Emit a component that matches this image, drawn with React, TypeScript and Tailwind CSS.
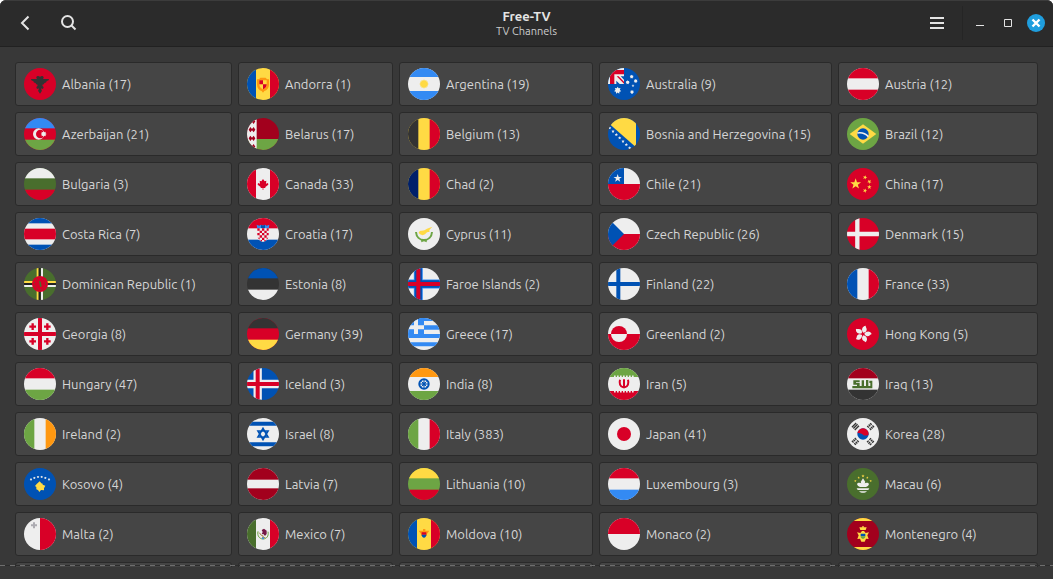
import React from 'react';

const WHITE = '#eeeeee';
const RED = '#d80027';
const DARK_RED = '#a2001d';
const BLUE = '#0052b4';
const SKY = '#338af3';
const NAVY = '#00206a';
const YELLOW = '#ffda44';
const ORANGE = '#ff9811';
const GREEN = '#6da544';
const FOREST = '#496e2d';
const BLACK = '#333333';

// All flags are drawn on a 96 x 96 grid and clipped to a circle.
const Rows = ({ c, a = 31, b = 65 }: { c: string[]; a?: number; b?: number }) => (
  <>
    <rect width="96" height="96" fill={c[1]} />
    <rect width="96" height={a} fill={c[0]} />
    <rect y={b} width="96" height={96 - b} fill={c[2]} />
  </>
);

const Cols = ({ c, a = 31, b = 65 }: { c: string[]; a?: number; b?: number }) => (
  <>
    <rect width="96" height="96" fill={c[1]} />
    <rect width={a} height="96" fill={c[0]} />
    <rect x={b} width={96 - b} height="96" fill={c[2]} />
  </>
);

const Bg = ({ c }: { c: string }) => <rect width="96" height="96" fill={c} />;

interface StarProps {
  x: number;
  y: number;
  r: number;
  c: string;
  n?: number;
  inner?: number;
  turn?: number;
}

const Star = ({ x, y, r, c, n = 5, inner = 0.4, turn = 0 }: StarProps) => {
  const points = Array.from({ length: n * 2 }, (_, i) => {
    const radius = i % 2 ? r * inner : r;
    const angle = (Math.PI * i) / n - Math.PI / 2 + (turn * Math.PI) / 180;
    return `${(x + radius * Math.cos(angle)).toFixed(1)},${(y + radius * Math.sin(angle)).toFixed(1)}`;
  }).join(' ');
  return <polygon points={points} fill={c} />;
};

const Plus = ({ x, y, s, t, c }: { x: number; y: number; s: number; t: number; c: string }) => (
  <path d={`M${x - s} ${y}h${s * 2}M${x} ${y - s}v${s * 2}`} stroke={c} strokeWidth={t} />
);

const Cross = ({ x, t, c }: { x: number; t: number; c: string }) => (
  <path d={`M${x} 0V96M0 48H96`} stroke={c} strokeWidth={t} />
);

const flags: Record<string, React.ReactNode> = {
  Albania: (
    <>
      <Bg c={RED} />
      <path
        d="M75 33H57c4-3 2-9-3-9-3 0-5 1-6 3-1-2-3-3-6-3-5 0-7 6-3 9H21c0 4 3 6 7 6 0 4 3 6 7 6 0 4 3 5 6 5l-1 5-3 2 2 6 5-2v4l-2 3 6 9 6-9-2-3v-4l5 2 2-6-3-2-1-5c3 0 6-1 6-5 4 0 7-2 7-6 4 0 7-2 7-6z"
        fill={BLACK}
      />
    </>
  ),
  Andorra: (
    <>
      <Cols c={[BLUE, YELLOW, RED]} a={27} b={69} />
      <path d="M30 34c5 0 8-2 10-5h16c2 3 5 5 10 5v16c0 10-6 16-14 19l-4 5-4-5c-8-3-14-9-14-19z" fill={ORANGE} />
      <path d="M37 37h22v13c0 7-5 11-11 14-6-3-11-7-11-14z" fill={YELLOW} />
      <path d="M37 37h11v12H37zM48 49h11c0 8-5 12-11 15z" fill={RED} />
    </>
  ),
  Argentina: (
    <>
      <Rows c={[SKY, WHITE, SKY]} a={27} b={69} />
      <Star x={48} y={48} r={14} c={YELLOW} n={12} inner={0.75} />
    </>
  ),
  Australia: (
    <>
      <Bg c={BLUE} />
      <rect width="48" height="48" fill={WHITE} />
      <path d="M6 6h42v13H19v29H6z" fill={RED} />
      <path d="M38 25h10v10zM25 38v10h10z" fill={BLUE} />
      <path d="M26 25h6l16 16v6z" fill={RED} />
      <Star x={29} y={67} r={11} c={WHITE} n={7} inner={0.6} />
      <Star x={71} y={26} r={6} c={WHITE} n={7} inner={0.7} />
      <Star x={59} y={43} r={6} c={WHITE} n={7} inner={0.7} />
      <Star x={83} y={39} r={6} c={WHITE} n={7} inner={0.7} />
      <Star x={75} y={53} r={5} c={WHITE} />
      <Star x={72} y={72} r={6} c={WHITE} n={7} inner={0.7} />
    </>
  ),
  Austria: <Rows c={[RED, WHITE, RED]} />,
  Azerbaijan: (
    <>
      <Rows c={[SKY, RED, GREEN]} />
      <circle cx="44" cy="48" r="17" fill={WHITE} />
      <circle cx="49" cy="48" r="13" fill={RED} />
      <Star x={59} y={48} r={9} c={WHITE} n={8} inner={0.65} />
    </>
  ),
  Belarus: (
    <>
      <Bg c={DARK_RED} />
      <rect y="63" width="96" height="33" fill={GREEN} />
      <rect width="29" height="96" fill={WHITE} />
      {[10, 35, 61, 86].map((y) => (
        <path key={y} d={`M5 ${y}l5-8 5 6 5-6 5 8-5 8-5-6-5 6z`} fill={DARK_RED} />
      ))}
    </>
  ),
  Belgium: <Cols c={[BLACK, YELLOW, RED]} />,
  'Bosnia and Herzegovina': (
    <>
      <Bg c={BLUE} />
      <path d="M2 16L84 88V0H2z" fill={YELLOW} />
      {[0, 1, 2, 3, 4, 5, 6].map((i) => (
        <Star key={i} x={5 + i * 10} y={30 + i * 10} r={5} c={WHITE} inner={0.5} />
      ))}
    </>
  ),
  Brazil: (
    <>
      <Bg c={GREEN} />
      <path d="M48 19l40 29-40 29L8 48z" fill={YELLOW} />
      <circle cx="48" cy="48" r="17" fill={BLUE} />
      <path d="M31 45c12-2 25 2 33 11" fill="none" stroke={WHITE} strokeWidth="5" />
    </>
  ),
  Bulgaria: <Rows c={[WHITE, FOREST, RED]} />,
  Canada: (
    <>
      <Cols c={[RED, WHITE, RED]} a={27} b={69} />
      <path d="M48 33l5 7 5-2-1 9 6-2 1 5-9 7v3h-6v6h-2v-6h-6v-3l-9-7 1-5 6 2-1-9 5 2z" fill={RED} />
    </>
  ),
  Chad: <Cols c={[NAVY, YELLOW, RED]} />,
  Chile: (
    <>
      <Bg c={WHITE} />
      <rect y="48" width="96" height="48" fill={RED} />
      <rect width="48" height="48" fill={BLUE} />
      <Star x={29} y={31} r={13} c={WHITE} />
    </>
  ),
  China: (
    <>
      <Bg c={RED} />
      <Star x={26} y={48} r={17} c={YELLOW} />
      <Star x={54} y={28} r={7} c={YELLOW} turn={20} />
      <Star x={67} y={41} r={7} c={YELLOW} turn={40} />
      <Star x={67} y={57} r={7} c={YELLOW} />
      <Star x={54} y={68} r={7} c={YELLOW} turn={20} />
    </>
  ),
  'Costa Rica': (
    <>
      <Rows c={[BLUE, WHITE, BLUE]} a={16} b={80} />
      <rect y="32" width="96" height="32" fill={RED} />
    </>
  ),
  Croatia: (
    <>
      <Rows c={[RED, WHITE, BLUE]} />
      <path d="M29 20l8 3 5-3 6 3 6-3 5 3 8-3-2 13H31z" fill={SKY} />
      <path d="M42 20l6 3 6-3v12H42z" fill={BLUE} />
      <path d="M31 31h34v24c0 9-8 15-17 17-9-2-17-8-17-17z" fill={WHITE} />
      <path
        d="M31 31h7v7h-7zM45 31h7v7h-7zM59 31h6v7h-6zM38 38h7v7h-7zM52 38h7v7h-7zM31 45h7v7h-7zM45 45h7v7h-7zM59 45h6v7h-6zM38 52h7v7h-7zM52 52h7v7h-7zM32 59h6v6zM45 59h7v7h-7zM59 59h5l-5 6zM39 66h6v5zM52 66h6l-6 5z"
        fill={RED}
      />
    </>
  ),
  Cyprus: (
    <>
      <Bg c={WHITE} />
      <path d="M32 45c0-6 5-7 9-7 6 0 11-3 16-6l16-6-9 10 1 5-8 2-6 6-7 3-8-3z" fill={YELLOW} />
      <path d="M24 42c1 15 11 24 24 24s23-9 24-24" fill="none" stroke={GREEN} strokeWidth="6" />
      <path d="M39 63h18l-1 10-8-3-8 3z" fill={GREEN} />
    </>
  ),
  'Czech Republic': (
    <>
      <Bg c={WHITE} />
      <rect y="48" width="96" height="48" fill={RED} />
      <path d="M0 0l48 48L0 96z" fill={BLUE} />
    </>
  ),
  Denmark: (
    <>
      <Bg c={RED} />
      <Cross x={31} t={13} c={WHITE} />
    </>
  ),
  'Dominican Republic': (
    <>
      <Bg c={FOREST} />
      <path d="M41 0v96M0 42h96" stroke={YELLOW} strokeWidth="6" />
      <path d="M54 0v96M0 54h96" stroke={WHITE} strokeWidth="6" />
      <path d="M47 0v96M0 48h96" stroke="#222222" strokeWidth="6" />
      <circle cx="48" cy="48" r="24" fill={RED} />
      <circle cx="48" cy="48" r="17" fill="none" stroke={FOREST} strokeWidth="3" strokeDasharray="3 8" />
      <path d="M45 38l5 3 3 14-4 3-2-8z" fill={FOREST} />
    </>
  ),
  Estonia: <Rows c={[BLUE, BLACK, WHITE]} />,
  'Faroe Islands': (
    <>
      <Bg c={WHITE} />
      <Cross x={31} t={27} c={SKY} />
      <Cross x={31} t={22} c={BLUE} />
      <Cross x={31} t={12} c={RED} />
    </>
  ),
  Finland: (
    <>
      <Bg c={WHITE} />
      <Cross x={31} t={12} c={BLUE} />
    </>
  ),
  France: <Cols c={[BLUE, WHITE, RED]} />,
  Georgia: (
    <>
      <Bg c={WHITE} />
      <Cross x={48} t={12} c={RED} />
      {[26, 70].map((x) => (
        <React.Fragment key={x}>
          <Plus x={x} y={26} s={10} t={7} c={RED} />
          <Plus x={x} y={70} s={10} t={7} c={RED} />
        </React.Fragment>
      ))}
    </>
  ),
  Germany: <Rows c={[BLACK, RED, YELLOW]} />,
  Greece: (
    <>
      <Bg c={WHITE} />
      <path d="M0 0h96v9H0zM0 22h96v13H0zM0 48h96v12H0zM0 73h96v12H0z" fill={SKY} />
      <rect width="48" height="48" fill={SKY} />
      <path d="M24 0v48M0 28h48" stroke={WHITE} strokeWidth="12" />
    </>
  ),
  Greenland: (
    <>
      <Bg c={WHITE} />
      <rect y="48" width="96" height="48" fill={RED} />
      <path d="M9 48a24 24 0 0 1 48 0z" fill={RED} />
      <path d="M9 48a24 24 0 0 0 48 0z" fill={WHITE} />
    </>
  ),
  'Hong Kong': (
    <>
      <Bg c={RED} />
      {[12, 84, 156, 228, 300].map((a) => (
        <path key={a} d="M48 44c-8-6-8-18 3-22 0 5 7 7 5 15-1 4-5 6-8 7z" fill={WHITE} transform={`rotate(${a} 48 48)`} />
      ))}
    </>
  ),
  Hungary: <Rows c={[RED, WHITE, GREEN]} />,
  Iceland: (
    <>
      <Bg c={BLUE} />
      <Cross x={32} t={25} c={WHITE} />
      <Cross x={32} t={12} c={RED} />
    </>
  ),
  India: (
    <>
      <Rows c={[ORANGE, WHITE, GREEN]} a={27} b={69} />
      <circle cx="48" cy="48" r="17" fill={BLUE} />
      <circle cx="48" cy="48" r="11" fill={WHITE} />
      <path d="M48 36v24M36 48h24M40 40l16 16M56 40L40 56" stroke={BLUE} strokeWidth="3" />
      <circle cx="48" cy="48" r="5" fill={BLUE} />
    </>
  ),
  Iran: (
    <>
      <Rows c={[GREEN, WHITE, RED]} a={27} b={69} />
      <path d="M18 25h62" stroke={WHITE} strokeWidth="5" strokeDasharray="5 4" />
      <path d="M18 71h62" stroke={WHITE} strokeWidth="5" strokeDasharray="5 4" />
      <path d="M36 35c-3 11 0 21 10 23M60 35c3 11 0 21-10 23" fill="none" stroke={RED} strokeWidth="6" />
      <path d="M48 34v27" stroke={RED} strokeWidth="6" />
    </>
  ),
  Iraq: (
    <>
      <Rows c={[DARK_RED, WHITE, BLACK]} />
      <path
        d="M16 61v-7h14v-4H19V37h19v6H27v2h11v9h6V37h7v17h6V36h7v18h6V45h-3v-7h9v23H16z"
        fill={FOREST}
      />
    </>
  ),
  Ireland: <Cols c={[GREEN, WHITE, ORANGE]} />,
  Israel: (
    <>
      <Bg c={WHITE} />
      <path d="M0 17h96M0 79h96" stroke={BLUE} strokeWidth="12" />
      <path d="M48 31l15 26H33zM48 65L33 39h30z" fill="none" stroke={BLUE} strokeWidth="5" />
    </>
  ),
  Italy: <Cols c={[GREEN, WHITE, RED]} />,
  Japan: (
    <>
      <Bg c={WHITE} />
      <circle cx="48" cy="48" r="21" fill={RED} />
    </>
  ),
  Korea: (
    <>
      <Bg c={WHITE} />
      <circle cx="48" cy="48" r="17" fill={BLUE} />
      <path d="M31 48a17 17 0 0 1 34 0c0 6-12 6-17 2s-17-8-17-2z" fill={RED} />
      {[45, 135, 225, 315].map((a, i) => (
        <path
          key={a}
          d="M16 39v18M22 39v18M10 39v18"
          stroke={BLACK}
          strokeWidth="4"
          strokeDasharray={i === 0 ? undefined : '7 3'}
          transform={`rotate(${a} 48 48)`}
        />
      ))}
    </>
  ),
  Kosovo: (
    <>
      <Bg c={BLUE} />
      {[[21, 34], [31, 30], [42, 27], [53, 27], [64, 30], [75, 34]].map(([x, y]) => (
        <Star key={x} x={x} y={y} r={4} c={WHITE} inner={0.6} />
      ))}
      <path d="M47 40l5 6 4 1v3l8 3-4 8v6l-9-1-5 6-4-6-5-2v-7l-4-3 5-6z" fill={YELLOW} />
    </>
  ),
  Latvia: <Rows c={[DARK_RED, WHITE, DARK_RED]} a={35} b={61} />,
  Lithuania: <Rows c={[YELLOW, GREEN, RED]} />,
  Luxembourg: <Rows c={[RED, WHITE, SKY]} />,
  Macau: (
    <>
      <Bg c={FOREST} />
      <Star x={48} y={24} r={5} c={YELLOW} />
      <Star x={35} y={29} r={4} c={YELLOW} />
      <Star x={61} y={29} r={4} c={YELLOW} />
      <Star x={25} y={39} r={4} c={YELLOW} />
      <Star x={71} y={39} r={4} c={YELLOW} />
      <path d="M48 31l7 11-2 4c5-3 11-2 13 2-1 5-5 8-9 9H39c-4-1-8-4-9-9 2-4 8-5 13-2l-2-4z" fill={WHITE} />
      <path d="M29 61h38l-3 5H32zM36 70h24c-7 6-17 6-24 0z" fill={WHITE} />
    </>
  ),
  Malta: (
    <>
      <Bg c={WHITE} />
      <rect x="48" width="48" height="96" fill={RED} />
      <Plus x={30} y={22} s={9} t={6} c="#acabb1" />
    </>
  ),
  Mexico: (
    <>
      <Cols c={[FOREST, WHITE, RED]} a={27} b={69} />
      <path d="M33 40c-3 14 5 23 15 23s18-8 15-22" fill="none" stroke={GREEN} strokeWidth="3" />
      <path d="M44 36l7-4 8 6v10l-5 6-5-6-5 1 3-7z" fill="#751a46" />
      <path d="M37 44l6 8 6 2-3 5h9" fill="none" stroke="#a5813f" strokeWidth="3" />
      <circle cx="48" cy="61" r="3" fill={SKY} />
    </>
  ),
  Moldova: (
    <>
      <Cols c={[BLUE, YELLOW, RED]} a={27} b={69} />
      <path d="M45 33h7v5h12l-7 10v5H39v-5l-7-10h13z" fill={ORANGE} />
      <path d="M41 43h14v7H41z" fill={RED} />
      <path d="M41 50h14c0 5-3 8-7 9-4-1-7-4-7-9z" fill={BLUE} />
    </>
  ),
  Monaco: (
    <>
      <Bg c={WHITE} />
      <rect width="96" height="48" fill={RED} />
    </>
  ),
  Montenegro: (
    <>
      <Rows c={[YELLOW, DARK_RED, YELLOW]} a={9} b={87} />
      <path d="M46 24h4v4h9l-3 8H40l-3-8h9z" fill={YELLOW} />
      <path d="M30 43l10 2 5-6h6l5 6 10-2-5 9 4 11-8-1-4 9H43l-4-9-8 1 4-11z" fill={YELLOW} />
      <path d="M41 47h14v8H41z" fill={BLUE} />
      <path d="M41 55h14c0 5-3 7-7 8-4-1-7-3-7-8z" fill={GREEN} />
    </>
  ),
};

const countries: { name: string; count: number }[] = [
  { name: 'Albania', count: 17 },
  { name: 'Andorra', count: 1 },
  { name: 'Argentina', count: 19 },
  { name: 'Australia', count: 9 },
  { name: 'Austria', count: 12 },
  { name: 'Azerbaijan', count: 21 },
  { name: 'Belarus', count: 17 },
  { name: 'Belgium', count: 13 },
  { name: 'Bosnia and Herzegovina', count: 15 },
  { name: 'Brazil', count: 12 },
  { name: 'Bulgaria', count: 3 },
  { name: 'Canada', count: 33 },
  { name: 'Chad', count: 2 },
  { name: 'Chile', count: 21 },
  { name: 'China', count: 17 },
  { name: 'Costa Rica', count: 7 },
  { name: 'Croatia', count: 17 },
  { name: 'Cyprus', count: 11 },
  { name: 'Czech Republic', count: 26 },
  { name: 'Denmark', count: 15 },
  { name: 'Dominican Republic', count: 1 },
  { name: 'Estonia', count: 8 },
  { name: 'Faroe Islands', count: 2 },
  { name: 'Finland', count: 22 },
  { name: 'France', count: 33 },
  { name: 'Georgia', count: 8 },
  { name: 'Germany', count: 39 },
  { name: 'Greece', count: 17 },
  { name: 'Greenland', count: 2 },
  { name: 'Hong Kong', count: 5 },
  { name: 'Hungary', count: 47 },
  { name: 'Iceland', count: 3 },
  { name: 'India', count: 8 },
  { name: 'Iran', count: 5 },
  { name: 'Iraq', count: 13 },
  { name: 'Ireland', count: 2 },
  { name: 'Israel', count: 8 },
  { name: 'Italy', count: 383 },
  { name: 'Japan', count: 41 },
  { name: 'Korea', count: 28 },
  { name: 'Kosovo', count: 4 },
  { name: 'Latvia', count: 7 },
  { name: 'Lithuania', count: 10 },
  { name: 'Luxembourg', count: 3 },
  { name: 'Macau', count: 6 },
  { name: 'Malta', count: 2 },
  { name: 'Mexico', count: 7 },
  { name: 'Moldova', count: 10 },
  { name: 'Monaco', count: 2 },
  { name: 'Montenegro', count: 4 },
];

const cardClass = 'h-11 rounded-[3px] border border-[#2a2a2a] bg-[#454545]';

const CountryButton: React.FC<{ name: string; count: number }> = ({ name, count }) => (
  <button className={`${cardClass} flex items-center gap-1.5 px-2 text-left hover:bg-[#4d4d4d]`}>
    <svg viewBox="0 0 96 96" className="size-8 shrink-0 overflow-hidden rounded-full" aria-hidden="true">
      {flags[name]}
    </svg>
    <span className="leading-5 whitespace-nowrap">{name} ({count})</span>
  </button>
);

const HeaderBar = () => (
  <header className="grid h-[47px] shrink-0 grid-cols-[1fr_auto_1fr] items-center rounded-t-[6px] border-t border-b border-t-[#3c3c3c] border-b-[#212121] bg-[#2b2b2b] pb-px text-[#e4e4e4]">
    <div className="flex items-center gap-2 pl-[7px]">
      <button aria-label="Back" className="flex size-9 items-center justify-center">
        <svg width="16" height="16" viewBox="0 0 16 16" fill="none" stroke="currentColor" strokeWidth="2">
          <path d="M11.5 1.5L5 8l6.5 6.5" />
        </svg>
      </button>
      <button aria-label="Search" className="flex size-9 items-center justify-center">
        <svg width="16" height="16" viewBox="0 0 16 16" fill="none" stroke="currentColor" strokeWidth="2">
          <circle cx="6.5" cy="6.5" r="5.5" />
          <path d="M10.5 10.5l4 4" />
        </svg>
      </button>
    </div>
    <div className="text-center">
      <h1 className="text-[13px] leading-4 font-bold">Free-TV</h1>
      <p className="text-[11px] leading-[14px] text-[#cccccc]">TV Channels</p>
    </div>
    <div className="flex items-center justify-end pr-[3px]">
      <button aria-label="Menu" className="flex size-9 items-center justify-center">
        <svg width="16" height="16" viewBox="0 0 16 16" fill="currentColor">
          <path d="M1 2h14v2H1zM1 7h14v2H1zM1 12h14v2H1z" />
        </svg>
      </button>
      <div className="mr-[3px] ml-[7px] h-[34px] w-px bg-[#252525]" />
      <button aria-label="Minimize" className="flex h-9 w-7 items-center justify-center">
        <svg width="16" height="16" viewBox="0 0 16 16" fill="currentColor">
          <path d="M4 10h8v1H4z" />
        </svg>
      </button>
      <button aria-label="Maximize" className="flex h-9 w-7 items-center justify-center">
        <svg width="16" height="16" viewBox="0 0 16 16" fill="none" stroke="currentColor">
          <path d="M4.5 4.5h7v7h-7z" />
        </svg>
      </button>
      <button aria-label="Close" className="flex h-9 w-7 items-center justify-center">
        <svg width="18" height="18" viewBox="0 0 18 18">
          <circle cx="9" cy="9" r="9" fill="#1f9ede" />
          <path d="M5.5 5.5l7 7M12.5 5.5l-7 7" stroke="#ffffff" strokeWidth="2.4" />
        </svg>
      </button>
    </div>
  </header>
);

export default function App() {
  return (
    <div className="h-screen bg-white font-['Ubuntu','Noto_Sans',sans-serif]">
      <div className="flex h-full flex-col rounded-t-[6px] bg-[#383838] text-[13px] text-[#d6d6d6]">
        <HeaderBar />
        <main className="relative min-h-0 flex-1 overflow-hidden">
          <div className="grid grid-cols-[217fr_155fr_194fr_233fr_200fr] gap-1.5 p-[15px]">
            {countries.map((c) => (
              <CountryButton key={c.name} name={c.name} count={c.count} />
            ))}
            {[0, 1, 2, 3, 4].map((i) => (
              <div key={i} className={cardClass} />
            ))}
          </div>
          <div className="absolute inset-x-0 bottom-px h-px bg-[repeating-linear-gradient(90deg,#6e6e6e_0_5px,#2c2c2c_5px_10px)]" />
        </main>
        <div className="h-3 shrink-0" />
      </div>
    </div>
  );
}
